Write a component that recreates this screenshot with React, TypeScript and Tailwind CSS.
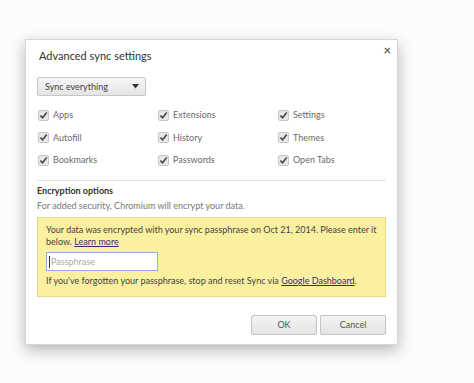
import React from "react";

function Check() {
  return (
    <span className="flex h-[11px] w-[11px] items-center justify-center rounded-[2px] border border-[#c8c8c8] bg-[#e6e6e6]">
      <svg width="9" height="9" viewBox="0 0 10 10">
        <path d="M1.5 5.2 L4 7.6 L8.6 1.8" fill="none" stroke="#4a4a4a" strokeWidth="1.8" />
      </svg>
    </span>
  );
}

function Item({ label }: { label: string }) {
  return (
    <div className="flex h-[14px] items-center gap-[4px] text-[9px] text-[#6a6a6a]">
      <Check />
      <span>{label}</span>
    </div>
  );
}

export default function App() {
  const rows = [
    ["Apps", "Extensions", "Settings"],
    ["Autofill", "History", "Themes"],
    ["Bookmarks", "Passwords", "Open Tabs"],
  ];
  return (
    <div
      className="h-[383px] w-[474px] bg-[#fcfcfc] pl-[25px] pt-[39px]"
      style={{ fontFamily: 'Lato, "Noto Sans", sans-serif' }}
    >
      <div className="relative h-[306px] w-[373px] bg-white px-[11px] pt-[8px] shadow-[0_5px_14px_rgba(0,0,0,0.28)] border border-[#d6d6d6]">
        <span className="absolute right-[6px] top-[1px] text-[13px] font-bold text-[#666]">×</span>
        <div className="pl-[2px] text-[11px] leading-[16px] text-[#333]">Advanced sync settings</div>
        <div className="mt-[13px] flex h-[19px] w-[109px] items-center justify-between rounded-[2px] border border-[#c6c6c6] bg-gradient-to-b from-[#f6f6f6] to-[#e4e4e4] pl-[7px] pr-[6px] text-[9px] text-[#444]">
          <span>Sync everything</span>
          <svg width="7" height="5" viewBox="0 0 7 5">
            <path d="M0 0 H7 L3.5 4.5 Z" fill="#333" />
          </svg>
        </div>
        <div className="mt-[12px] flex flex-col gap-[8.5px] pl-[1px]">
          {rows.map((r, i) => (
            <div key={i} className="grid grid-cols-[120px_120px_1fr]">
              {r.map((l) => (
                <Item key={l} label={l} />
              ))}
            </div>
          ))}
        </div>
        <div className="mt-[13px] h-px bg-[#e4e4e4]" />
        <div className="mt-[3px] text-[9px] font-bold leading-[14px] text-[#333]">Encryption options</div>
        <div className="mt-[1px] text-[9px] leading-[14px] text-[#777]">
          For added security, Chromium will encrypt your data.
        </div>
        <div className="mt-[4px] border border-[#e6d98a] bg-[#fbf0a0] px-[8px] pb-[9px] pt-[6px] text-[9px] leading-[12px] text-[#444]">
          <p>
            Your data was encrypted with your sync passphrase on Oct 21, 2014. Please enter it below.{" "}
            <a className="text-[#3a2a7a] underline">Learn more</a>
          </p>
          <div className="mt-[4px] flex h-[19px] w-[112px] items-center border border-[#8fb0d8] bg-white pl-[2px] text-[9px] text-[#aaa]">
            <span className="mr-[1px] h-[12px] w-px bg-[#333]" />
            Passphrase
          </div>
          <p className="mt-[4px]">
            If you've forgotten your passphrase, stop and reset Sync via{" "}
            <a className="text-[#3a2a7a] underline">Google Dashboard</a>.
          </p>
        </div>
        <div className="mt-[18px] flex justify-end gap-[3px]">
          <div className="flex h-[20px] w-[66px] items-center justify-center rounded-[2px] border border-[#c4c4c4] bg-gradient-to-b from-[#f4f4f4] to-[#e4e4e4] text-[9px] text-[#555]">
            OK
          </div>
          <div className="flex h-[20px] w-[66px] items-center justify-center rounded-[2px] border border-[#c4c4c4] bg-gradient-to-b from-[#f4f4f4] to-[#e4e4e4] text-[9px] text-[#555]">
            Cancel
          </div>
        </div>
      </div>
    </div>
  );
}
